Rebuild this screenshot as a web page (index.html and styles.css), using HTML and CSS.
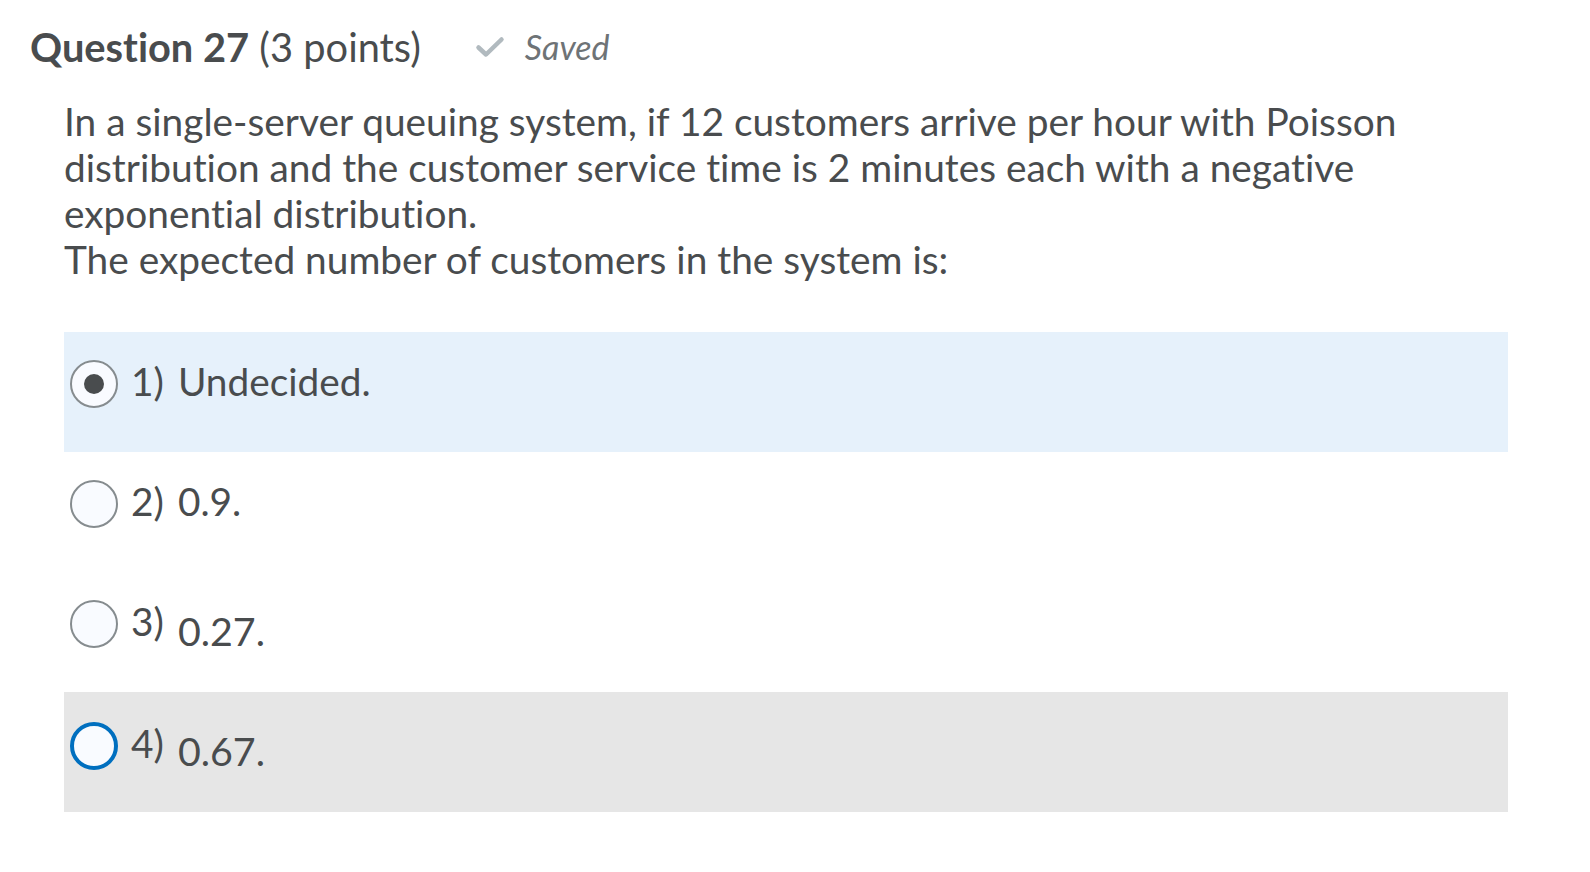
FILE: index.html
```html
<!DOCTYPE html>
<html lang="en">
<head>
<meta charset="utf-8">
<title>Question 27</title>
<link rel="stylesheet" href="styles.css">
</head>
<body>
<div class="question">
  <div class="q-header">
    <h2 class="q-title"><span class="q-num">Question 27</span> <span class="q-points">(3 points)</span></h2>
    <div class="q-saved">
      <svg class="check" width="30" height="22" viewBox="0 0 30 22" aria-hidden="true">
        <path d="M3.5 11.5 L11 18.5 L26.5 3.5" fill="none" stroke="#b1babf" stroke-width="4.5" stroke-linecap="round" stroke-linejoin="round"/>
      </svg>
      <span class="saved-text">Saved</span>
    </div>
  </div>
  <div class="q-text">In a single-server queuing system, if 12 customers arrive per hour with Poisson distribution and the customer service time is 2 minutes each with a negative exponential distribution.<br>The expected number of customers in the system is:</div>
  <ul class="options">
    <li class="option selected">
      <span class="radio checked"></span>
      <span class="opt-num">1)</span>
      <span class="opt-val">Undecided.</span>
    </li>
    <li class="option">
      <span class="radio"></span>
      <span class="opt-num">2)</span>
      <span class="opt-val">0.9.</span>
    </li>
    <li class="option">
      <span class="radio"></span>
      <span class="opt-num">3)</span>
      <span class="opt-val big">0.27.</span>
    </li>
    <li class="option hover">
      <span class="radio focus"></span>
      <span class="opt-num">4)</span>
      <span class="opt-val big">0.67.</span>
    </li>
  </ul>
</div>
</body>
</html>
```

FILE: styles.css
```css
html, body {
  margin: 0;
  padding: 0;
  background: #ffffff;
}

body {
  font-family: Lato, "Open Sans", "Liberation Sans", sans-serif;
  color: #494c4e;
  font-variant-ligatures: none;
  font-feature-settings: "liga" 0, "clig" 0;
}

.question {
  padding-top: 27px;
}

.q-header {
  display: flex;
  align-items: center;
  padding-left: 30px;
  height: 39px;
}

.q-title {
  margin: 0;
  font-size: 39.8px;
  line-height: 39px;
  font-weight: 400;
  color: #494c4e;
}

.q-num {
  font-weight: 700;
}

.q-saved {
  display: flex;
  align-items: center;
  margin-left: 54px;
  color: #6e7376;
}

.check {
  display: block;
}

.saved-text {
  margin-left: 20px;
  font-style: italic;
  font-size: 34px;
  line-height: 39px;
}

.q-text {
  margin: 32px 0 0 64px;
  width: 1444px;
  font-size: 38.85px;
  line-height: 46px;
}

.options {
  list-style: none;
  margin: 50px 0 0 64px;
  padding: 0;
  width: 1444px;
}

.option {
  display: flex;
  align-items: flex-start;
  height: 120px;
  box-sizing: border-box;
  padding-top: 26px;
  font-size: 38.8px;
  line-height: 46px;
}

.option.selected {
  background: #e6f1fb;
}

.option.hover {
  background: #e6e6e6;
}

.radio {
  flex: none;
  box-sizing: border-box;
  width: 48px;
  height: 48px;
  margin: 2px 0 0 6px;
  border: 2px solid #868c8f;
  border-radius: 50%;
  background: #f9fbff;
  display: flex;
  align-items: center;
  justify-content: center;
}

.radio.checked::after {
  content: "";
  width: 20px;
  height: 20px;
  border-radius: 50%;
  background: #494c4e;
}

.radio.focus {
  border: 4px solid #006fbf;
  margin-top: 4px;
}

.opt-num {
  margin-left: 13px;
}

.opt-val {
  margin-left: 14px;
}

.opt-val.big {
  font-size: 39.4px;
  margin-top: 10px;
}

.hover .opt-num {
  margin-top: 2px;
}
```
